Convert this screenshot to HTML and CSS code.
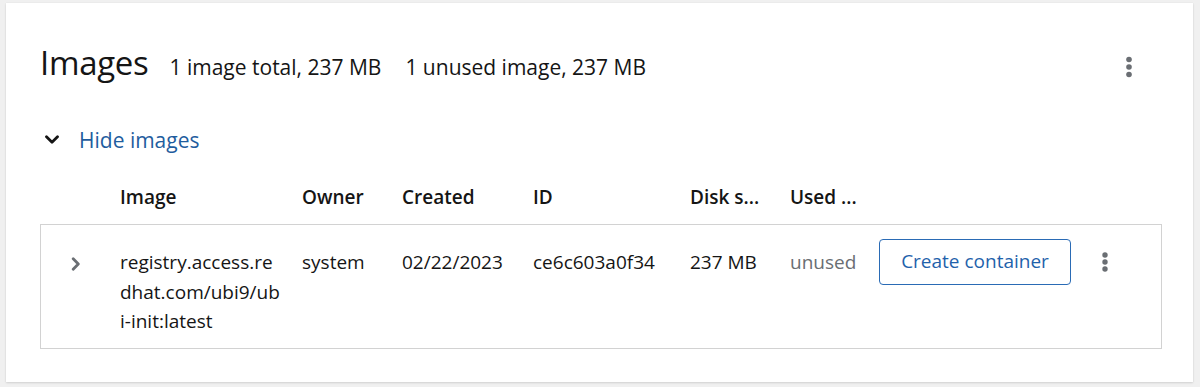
FILE: index.html
```html
<!DOCTYPE html>
<html lang="en">
<head>
<meta charset="utf-8">
<title>Images</title>
<link rel="stylesheet" href="styles.css">
</head>
<body>
<section class="card">
  <header class="card-head">
    <h2 class="title">Images</h2>
    <span class="stat">1 image total, 237 MB</span>
    <span class="stat">1 unused image, 237 MB</span>
    <button class="kebab head-kebab" aria-label="Actions">
      <svg width="8" height="22" viewBox="0 0 8 22"><circle cx="4" cy="3.5" r="2.8"/><circle cx="4" cy="11" r="2.8"/><circle cx="4" cy="18.5" r="2.8"/></svg>
    </button>
  </header>
  <div class="toggle">
    <svg class="chev-down" width="14" height="10" viewBox="0 0 14 10"><path d="M1.5 1.8 L7 7.3 L12.5 1.8" fill="none" stroke="#151515" stroke-width="2.8" stroke-linecap="round" stroke-linejoin="round"/></svg>
    <a class="link">Hide images</a>
  </div>
  <div class="table">
    <div class="row thead">
      <span></span>
      <span>Image</span>
      <span>Owner</span>
      <span>Created</span>
      <span>ID</span>
      <span>Disk s...</span>
      <span>Used ...</span>
      <span></span>
    </div>
    <div class="tbody">
      <div class="row trow">
        <span class="cell expand">
          <svg width="10" height="14" viewBox="0 0 10 14"><path d="M2.2 1.8 L7.3 7 L2.2 12.2" fill="none" stroke="#6a6e73" stroke-width="2.8" stroke-linecap="round" stroke-linejoin="round"/></svg>
        </span>
        <span class="cell name">registry.access.re<br>dhat.com/ubi9/ub<br>i-init:latest</span>
        <span class="cell">system</span>
        <span class="cell">02/22/2023</span>
        <span class="cell">ce6c603a0f34</span>
        <span class="cell">237 MB</span>
        <span class="cell muted">unused</span>
        <span class="actions">
          <button class="btn">Create container</button>
          <button class="kebab" aria-label="Image actions">
            <svg width="8" height="20" viewBox="0 0 8 20"><circle cx="4" cy="3" r="2.7"/><circle cx="4" cy="10" r="2.7"/><circle cx="4" cy="17" r="2.7"/></svg>
          </button>
        </span>
      </div>
    </div>
  </div>
</section>
</body>
</html>
```

FILE: styles.css
```css
* { box-sizing: border-box; }
html, body { height: 100%; }
body {
  margin: 0;
  padding: 3px 7px 5px 6px;
  background: #f0f0f0;
  font-family: "Open Sans", "Noto Sans", sans-serif;
  color: #151515;
}
.card {
  background: #fff;
  height: 379px;
  padding: 0 31px 0 34px;
  box-shadow: 0 1px 2px rgba(0,0,0,0.12), 0 0 1px rgba(0,0,0,0.08);
}
.card-head {
  display: flex;
  align-items: baseline;
  height: 108px;
  padding-top: 43px;
  position: relative;
}
.title {
  margin: 0;
  font-size: 33px;
  font-weight: 400;
  line-height: 1;
  letter-spacing: -0.3px;
  margin-right: 21px;
}
.stat {
  font-size: 21px;
  margin-right: 24px;
}
.kebab {
  border: 0;
  background: none;
  padding: 0;
  fill: #6a6e73;
  display: flex;
}
.head-kebab {
  position: absolute;
  right: 29px;
  top: 53px;
}
.toggle {
  display: flex;
  align-items: center;
  height: 48px;
  margin-top: 5px;
}
.chev-down { margin-left: 5px; margin-right: 20px; }
.link {
  color: #1f5d9e;
  font-size: 21px;
}
.row {
  display: grid;
  grid-template-columns: 80px 182px 100px 131px 157px 100px 89px 1fr;
}
.thead {
  height: 60px;
  align-items: center;
  padding-top: 5px;
  font-size: 19px;
  font-weight: 600;
}
.tbody {
  border: 1px solid #d2d2d2;
  height: 125px;
}
.trow {
  margin-left: -1px;
  padding-top: 14px;
  font-size: 19px;
  line-height: 29.5px;
}
.cell { padding-top: 9px; }
.expand { padding-left: 31px; padding-top: 11px; }
.muted { color: #6a6e73; }
.actions {
  display: flex;
  align-items: flex-start;
}
.btn {
  font: inherit;
  font-size: 19px;
  color: #1f62ab;
  background: #fff;
  border: 1px solid #2a6bb5;
  border-radius: 4px;
  width: 192px;
  height: 46px;
  padding: 0;
}
.actions .kebab { margin-left: 30px; margin-top: 13px; }
```
